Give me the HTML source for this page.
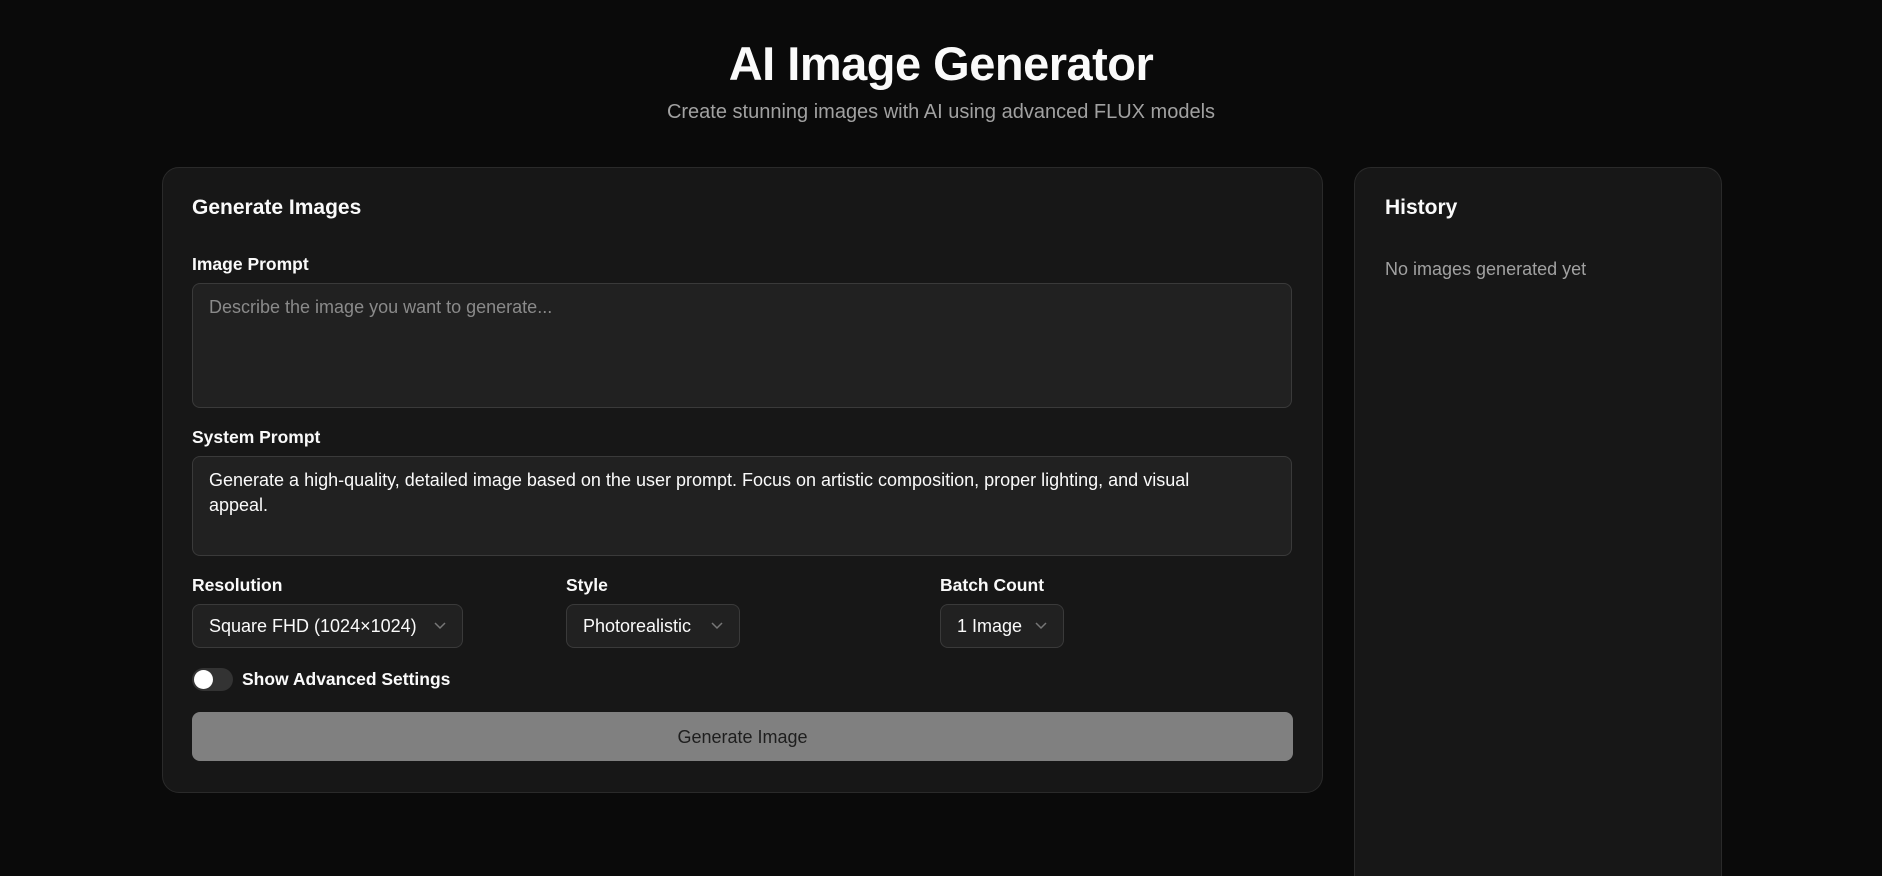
<!DOCTYPE html>
<html><head><meta charset="utf-8"><style>
*{box-sizing:border-box;margin:0;padding:0}
html,body{width:1882px;height:876px;overflow:hidden}
body{background:#0a0a0a;font-family:"Liberation Sans",sans-serif;color:#fafafa;position:relative}
.a{position:absolute}
h1{position:absolute;left:0;width:1882px;text-align:center;top:36px;font-size:47px;font-weight:700;letter-spacing:-0.5px}
.sub{left:0;width:1882px;text-align:center;top:101px;font-size:20px;color:#a1a1a1}
.card{background:#171717;border:1px solid #2a2a2a;border-radius:17px}
.lbl{font-size:17.5px;font-weight:700;color:#fafafa}
.ta{background:#212121;border:1px solid #3a3a3a;border-radius:8px;left:192px;width:1100px;font-size:18px;padding:11px 70px 10px 16px;line-height:25px}
.sel{background:#212121;border:1px solid #3a3a3a;border-radius:8px;top:604px;height:44px;font-size:18px;padding:0 16px;line-height:43px;color:#fafafa}
.sel svg{position:absolute;right:16px;top:17px}
</style></head><body>
<h1>AI Image Generator</h1>
<div class="a sub">Create stunning images with AI using advanced FLUX models</div>
<div class="a card" style="left:162px;top:167px;width:1161px;height:626px"></div>
<div class="a card" style="left:1354px;top:167px;width:368px;height:709px;border-bottom:none;border-bottom-left-radius:0;border-bottom-right-radius:0"></div>
<div class="a" style="left:192px;top:196px;font-size:21px;font-weight:700">Generate Images</div>
<div class="a lbl" style="left:192px;top:254px">Image Prompt</div>
<div class="a ta" style="top:283px;height:125px;color:#8a8a8a">Describe the image you want to generate...</div>
<div class="a lbl" style="left:192px;top:427px">System Prompt</div>
<div class="a ta" style="top:456px;height:100px">Generate a high-quality, detailed image based on the user prompt. Focus on artistic composition, proper lighting, and visual appeal.</div>
<div class="a lbl" style="left:192px;top:575px">Resolution</div>
<div class="a lbl" style="left:566px;top:575px">Style</div>
<div class="a lbl" style="left:940px;top:575px">Batch Count</div>
<div class="a sel" style="left:192px;width:271px">Square FHD (1024×1024)<svg width="12" height="8" viewBox="0 0 12 8"><path d="M1 1l5 5 5-5" fill="none" stroke="#777" stroke-width="1.5"/></svg></div>
<div class="a sel" style="left:566px;width:174px">Photorealistic<svg width="12" height="8" viewBox="0 0 12 8"><path d="M1 1l5 5 5-5" fill="none" stroke="#777" stroke-width="1.5"/></svg></div>
<div class="a sel" style="left:940px;width:124px">1 Image<svg width="12" height="8" viewBox="0 0 12 8"><path d="M1 1l5 5 5-5" fill="none" stroke="#777" stroke-width="1.5"/></svg></div>
<div class="a" style="left:192px;top:668px;width:41px;height:23px;border-radius:12px;background:#333"></div>
<div class="a" style="left:194px;top:670px;width:19px;height:19px;border-radius:50%;background:#fff"></div>
<div class="a lbl" style="left:242px;top:669px">Show Advanced Settings</div>
<div class="a" style="left:192px;top:712px;width:1101px;height:49px;border-radius:8px;background:#808080;color:#1e1e1e;font-size:18px;text-align:center;line-height:51px">Generate Image</div>
<div class="a" style="left:1385px;top:196px;font-size:21px;font-weight:700">History</div>
<div class="a" style="left:1385px;top:259px;font-size:18px;color:#a1a1a1">No images generated yet</div>
</body></html>
